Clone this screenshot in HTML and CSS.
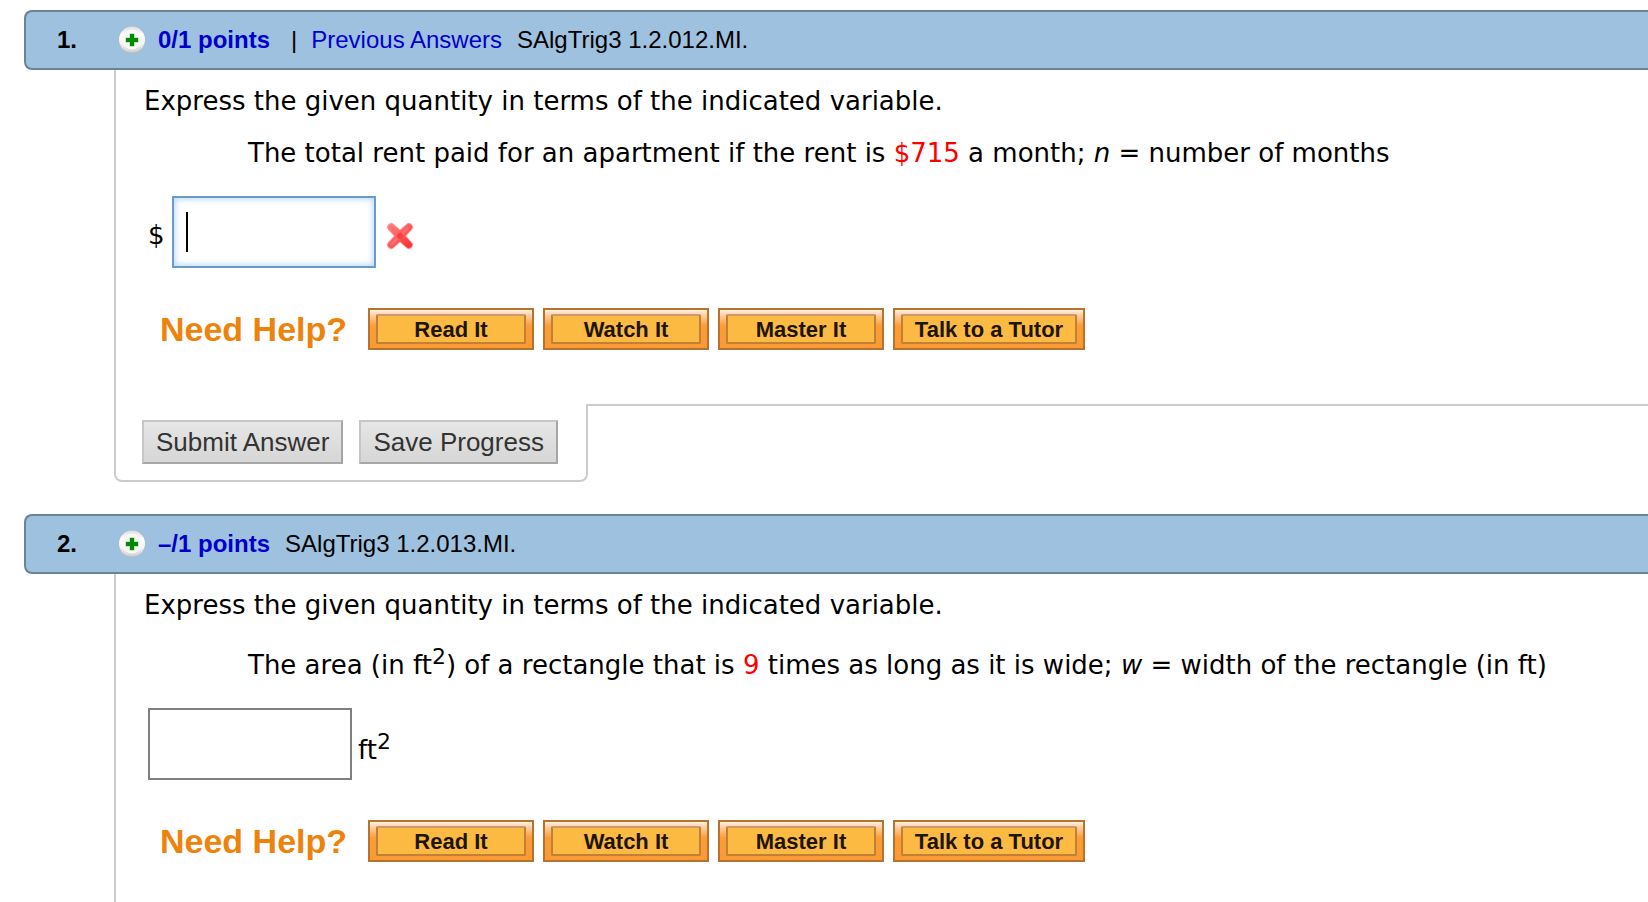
FILE: index.html
```html
<!DOCTYPE html>
<html lang="en">
<head>
<meta charset="utf-8">
<title>Homework</title>
<link rel="stylesheet" href="styles.css">
</head>
<body>
<svg class="defs" aria-hidden="true">
  <defs>
    <linearGradient id="disc" x1="0" y1="0" x2="0" y2="1">
      <stop offset="0" stop-color="#dcdcdc"/>
      <stop offset="0.3" stop-color="#ffffff"/>
      <stop offset="0.65" stop-color="#f4f4f4"/>
      <stop offset="1" stop-color="#cfcfcf"/>
    </linearGradient>
    <linearGradient id="cross" x1="0" y1="0" x2="1" y2="1">
      <stop offset="0" stop-color="#ff8585"/>
      <stop offset="0.5" stop-color="#fb5a5a"/>
      <stop offset="1" stop-color="#f42a2a"/>
    </linearGradient>
    <symbol id="plus" viewBox="0 0 28 28">
      <circle cx="14" cy="14" r="13.5" fill="#b4bcc2"/>
      <circle cx="14" cy="13.6" r="13" fill="url(#disc)"/>
      <circle cx="14" cy="13.5" r="10" fill="#f8f8f8"/>
      <path d="M11.5 7.5h5v4h4v5h-4v4h-5v-4h-4v-5h4z" fill="#8fd08f"/>
      <path d="M12 8h4v4h4v4h-4v4h-4v-4h-4v-4h4z" fill="#058a05"/>
    </symbol>
  </defs>
</svg>
<main class="page">
  <section class="question">
    <header class="bar">
      <span class="number">1.</span>
      <button class="expand" type="button" aria-label="Details"><svg width="28" height="28"><use href="#plus"/></svg></button>
      <a class="points" href="#points1">0/1 points</a>
      <span class="divider">|</span>
      <a class="previous" href="#previous">Previous Answers</a>
      <span class="source">SAlgTrig3 1.2.012.MI.</span>
    </header>
    <div class="content">
      <p class="prompt">Express the given quantity in terms of the indicated variable.</p>
      <p class="statement">The total rent paid for an apartment if the rent is <span class="value">$715</span> a month; <i>n</i> = number of months</p>
      <div class="answer">
        <label class="prefix" for="answer1">$</label>
        <div class="field">
          <input class="box active" id="answer1" type="text">
          <span class="caret"></span>
        </div>
        <svg class="wrong" width="28" height="28" viewBox="0 0 28 28" role="img" aria-label="Incorrect">
          <path d="M5.500 1.200 Q7 1.600 14 8.200 Q21 1.600 22.500 1.200 Q26.400 1.400 26.800 5.500 Q26.400 7 19.600 14 Q26.400 21 26.800 22.500 Q26.400 26.400 22.500 26.800 Q21 26.400 14 19.800 Q7 26.400 5.500 26.800 Q1.600 26.400 1.200 22.500 Q1.600 21 8.400 14 Q1.600 7 1.200 5.500 Q1.600 1.600 5.500 1.200 Z" fill="url(#cross)" stroke="#ff9a9a" stroke-width="1" stroke-linejoin="round"/>
          <path d="M6 6 L14 14 M22 6 L14 14 M6 22 L14 14" stroke="#ff6b6b" stroke-width="3" stroke-linecap="round"/>
          <circle cx="14" cy="14" r="3" fill="#f93f3f"/>
        </svg>
      </div>
      <div class="help">
        <span class="help-title">Need Help?</span>
        <button class="help-button" type="button"><span class="face">Read It</span></button>
        <button class="help-button" type="button"><span class="face">Watch It</span></button>
        <button class="help-button" type="button"><span class="face">Master It</span></button>
        <button class="help-button wide" type="button"><span class="face">Talk to a Tutor</span></button>
      </div>
    </div>
    <footer class="foot">
      <div class="actions">
        <button class="action" type="submit">Submit Answer</button>
        <button class="action" type="button">Save Progress</button>
      </div>
      <div class="rule"></div>
    </footer>
  </section>
  <section class="question last">
    <header class="bar">
      <span class="number">2.</span>
      <button class="expand" type="button" aria-label="Details"><svg width="28" height="28"><use href="#plus"/></svg></button>
      <a class="points" href="#points2">–/1 points</a>
      <span class="source">SAlgTrig3 1.2.013.MI.</span>
    </header>
    <div class="content">
      <p class="prompt">Express the given quantity in terms of the indicated variable.</p>
      <p class="statement squared">The area (in ft<sup>2</sup>) of a rectangle that is <span class="value">9</span> times as long as it is wide; <i>w</i> = width of the rectangle (in ft)</p>
      <div class="answer">
        <input class="box" id="answer2" type="text">
        <label class="unit" for="answer2">ft<sup>2</sup></label>
      </div>
      <div class="help">
        <span class="help-title">Need Help?</span>
        <button class="help-button" type="button"><span class="face">Read It</span></button>
        <button class="help-button" type="button"><span class="face">Watch It</span></button>
        <button class="help-button" type="button"><span class="face">Master It</span></button>
        <button class="help-button wide" type="button"><span class="face">Talk to a Tutor</span></button>
      </div>
    </div>
  </section>
</main>
</body>
</html>
```
FILE: styles.css
```css
* {
  box-sizing: border-box;
}

body {
  margin: 0;
  background: #fff;
  color: #000;
  font-family: Verdana, "DejaVu Sans", sans-serif;
  font-size: 26px;
  line-height: 32px;
}

p {
  margin: 0;
}

button {
  margin: 0;
  font-family: Arial, "Liberation Sans", sans-serif;
}

sup {
  font-size: 22px;
  line-height: 0;
  vertical-align: 10px;
}

.defs {
  position: absolute;
  width: 0;
  height: 0;
}

.page {
  display: flex;
  flex-direction: column;
  gap: 32px;
  min-height: 100vh;
  padding: 10px 0 0 24px;
}

.question {
  display: flex;
  flex-direction: column;
}

.last {
  flex: 1;
}

.bar {
  display: flex;
  align-items: center;
  height: 60px;
  padding-left: 31px;
  border: 2px solid #6a8494;
  border-right: 0;
  border-radius: 8px 0 0 8px;
  background: #9dc1df;
  font-family: Arial, "Liberation Sans", sans-serif;
  font-size: 24px;
}

.bar a {
  color: #0000cc;
  text-decoration: none;
}

.number {
  width: 61px;
  font-weight: bold;
}

.expand {
  display: flex;
  padding: 0;
  border: 0;
  background: none;
}

.bar .points {
  margin-left: 12px;
  font-weight: bold;
}

.divider {
  margin: 0 14px 0 21px;
}

.source {
  margin-left: 15px;
}

.content {
  display: flex;
  flex-direction: column;
  margin-left: 90px;
  padding: 15px 0 54px 28px;
  border-left: 2px solid #ccc;
}

.last .content {
  flex: 1;
}

.statement {
  margin: 20px 0 27px 104px;
}

.squared {
  margin-top: 28px;
}

.value {
  color: #f00;
}

.answer {
  display: flex;
  align-items: center;
  padding-left: 4px;
}

.prefix {
  width: 24px;
  padding-top: 6px;
}

.field {
  position: relative;
  display: flex;
}

.box {
  width: 204px;
  height: 72px;
  padding: 4px 12px;
  border: 2px solid #808080;
  background: #fff;
  font-size: 26px;
  outline: 0;
}

.active {
  border-color: #6b9bc9;
  box-shadow: inset 0 0 6px 1px #b3d6fb;
}

.caret {
  position: absolute;
  top: 16px;
  left: 14px;
  width: 2px;
  height: 40px;
  background: #000;
}

.wrong {
  margin: 8px 0 0 10px;
}

.unit {
  padding: 12px 0 0 6px;
}

.help {
  display: flex;
  align-items: center;
  gap: 9px;
  margin-top: 40px;
  padding-left: 16px;
}

.help-title {
  width: 199px;
  color: #ee830b;
  font-family: Arial, "Liberation Sans", sans-serif;
  font-size: 34px;
  font-weight: bold;
}

.help-button {
  display: flex;
  width: 166px;
  height: 42px;
  padding: 4px 6px;
  border: 2px solid #b4742f;
  background: linear-gradient(#fff0e2, #fcd0a4 5px, #fb9c35 16px, #fb9a32);
  color: #1c1503;
  font-size: 22px;
  font-weight: bold;
}

.wide {
  width: 192px;
}

.face {
  flex: 1;
  height: 30px;
  border: 2px solid #bd8137;
  border-top-color: #c99a74;
  border-radius: 2px;
  background: #fdba43;
  line-height: 28px;
  text-align: center;
  white-space: nowrap;
}

.foot {
  display: flex;
  margin-left: 90px;
}

.actions {
  display: flex;
  gap: 16px;
  padding: 16px 28px 16px 26px;
  border: 2px solid #ccc;
  border-top: 0;
  border-radius: 0 0 8px 8px;
}

.action {
  height: 44px;
  padding: 0 12px;
  border: 2px solid;
  border-color: #c6c6c6 #a6a6a6 #a6a6a6 #c6c6c6;
  background: linear-gradient(#e6e6e6, #d6d6d6);
  color: #333;
  font-size: 26px;
  line-height: 36px;
}

.rule {
  flex: 1;
  border-top: 2px solid #ccc;
}
```
